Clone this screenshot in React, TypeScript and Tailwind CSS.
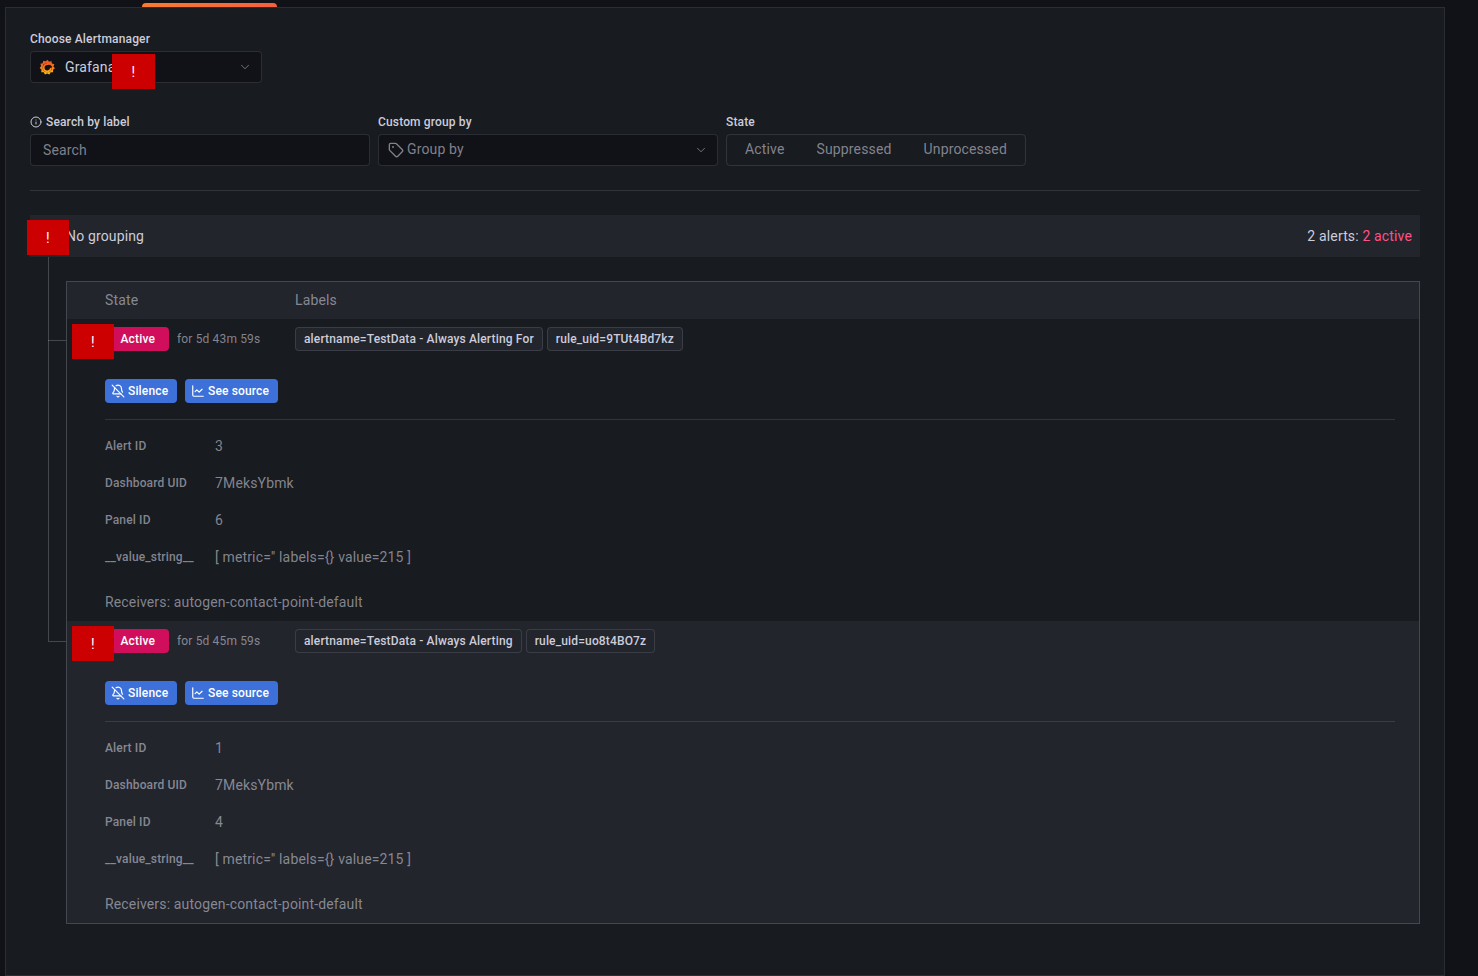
import { BellOff, ChartLine, ChevronDown, Info, Tag } from "lucide-react";

function Warn({ className }: { className: string }) {
  return (
    <div
      className={`absolute z-10 flex h-[35px] items-center justify-center bg-[#cc0000] text-sm text-white ${className}`}
    >
      !
    </div>
  );
}

function GrafanaLogo() {
  return (
    <svg viewBox="0 0 24 24" className="h-4 w-4 shrink-0">
      <defs>
        <linearGradient id="grafana" gradientUnits="userSpaceOnUse" x1="12" y1="24" x2="12" y2="1">
          <stop offset="0" stopColor="#fbca0a" />
          <stop offset="0.5" stopColor="#f47a20" />
          <stop offset="1" stopColor="#ee4a26" />
        </linearGradient>
      </defs>
      <path
        fill="url(#grafana)"
        d="M13 1l2 3 3.600-1 .8 3.600 3.600 1.200-1.400 3.400L24 14l-3 2 .2 3.800-3.700.2-2 3.400-3.300-1.800-3.300 1.800-1.700-3.400-3.800-.3.300-3.800L1 13.400l2.300-2.800L2 7.200l3.600-1L6.400 2.500 10 3.400z"
      />
      <circle cx="12.500" cy="13" r="7" fill="#111217" />
      <path
        fill="none"
        stroke="url(#grafana)"
        strokeWidth="2.800"
        d="M20 9.500A8 8 0 0 0 12.500 7.500a5.500 5.500 0 1 0 5.500 5.500"
      />
    </svg>
  );
}

function Detail({ name, value }: { name: string; value: string }) {
  return (
    <div className="flex h-[37px] items-center">
      <div className="w-[110px] text-xs font-medium text-[#ccccdc]/60">{name}</div>
      <div className="text-sm text-[#ccccdc]/60">{value}</div>
    </div>
  );
}

function LabelTag({ text }: { text: string }) {
  return (
    <div className="flex h-6 items-center rounded-sm border border-[#ccccdc]/15 bg-[#22252b] px-2 text-xs font-medium text-[#ccccdc]">
      {text}
    </div>
  );
}

type Alert = {
  since: string;
  labels: string[];
  alertId: string;
  panelId: string;
  alt?: boolean;
};

function AlertRow({ alert }: { alert: Alert }) {
  return (
    <div className={`h-[302px] pl-[38px] pr-6 pt-2 ${alert.alt ? "bg-[#22252b]" : ""}`}>
      <div className="flex h-6 items-center">
        <div className="flex w-[190px] items-center">
          <div className="flex h-6 w-16 items-center justify-end rounded-sm bg-[#d10e5c] pr-[14px] text-xs font-medium text-white">
            Active
          </div>
          <div className="ml-2 text-xs text-[#ccccdc]/60">for {alert.since}</div>
        </div>
        <div className="flex gap-1">
          {alert.labels.map((l) => (
            <LabelTag key={l} text={l} />
          ))}
        </div>
      </div>
      <div className="mt-7 flex gap-2">
        <button className="flex h-6 w-[72px] items-center gap-[3px] rounded-sm bg-[#3d71d9] pl-[6px] text-xs font-medium text-white">
          <BellOff size={14} strokeWidth={2} />
          Silence
        </button>
        <button className="flex h-6 w-[93px] items-center gap-[3px] rounded-sm bg-[#3d71d9] pl-[6px] text-xs font-medium text-white">
          <ChartLine size={14} strokeWidth={2} />
          See source
        </button>
      </div>
      <div className="mt-4 border-t border-[#ccccdc]/15 pt-[7px]">
        <Detail name="Alert ID" value={alert.alertId} />
        <Detail name="Dashboard UID" value="7MeksYbmk" />
        <Detail name="Panel ID" value={alert.panelId} />
        <Detail name="__value_string__" value="[ metric='' labels={} value=215 ]" />
      </div>
      <div className="mt-[18px] text-sm leading-[18px] text-[#ccccdc]/60">
        Receivers: autogen-contact-point-default
      </div>
    </div>
  );
}

const alerts: Alert[] = [
  {
    since: "5d 43m 59s",
    labels: ["alertname=TestData - Always Alerting For", "rule_uid=9TUt4Bd7kz"],
    alertId: "3",
    panelId: "6",
  },
  {
    since: "5d 45m 59s",
    labels: ["alertname=TestData - Always Alerting", "rule_uid=uo8t4BO7z"],
    alertId: "1",
    panelId: "4",
    alt: true,
  },
];

export default function App() {
  return (
    <div className="relative flex h-[976px] w-[1478px] flex-col overflow-hidden bg-[#111217] font-['Roboto',sans-serif] tracking-[0.15px] text-[#ccccdc]">
      <div className="h-[7px] shrink-0 pt-[3px]">
        <div className="ml-[142px] h-[4px] w-[135px] rounded-t-sm bg-gradient-to-r from-[#f97b2d] to-[#f55f3e]" />
      </div>

      <div className="ml-[5px] w-[1440px] flex-1 border border-[#ccccdc]/10 bg-[#181b1f] px-6 pt-[23px]">
        <div className="text-xs font-medium leading-4">Choose Alertmanager</div>
        <div className="mt-[4px] flex h-8 w-[232px] items-center rounded-sm border border-[#ccccdc]/15 bg-[#111217] pl-2 pr-[9px] text-sm">
          <GrafanaLogo />
          <span className="ml-[10px] flex-1">Grafana</span>
          <ChevronDown size={14} strokeWidth={1.5} className="text-[#ccccdc]/60" />
        </div>

        <div className="mt-[31px] flex gap-2">
          <div className="w-[340px]">
            <div className="flex h-[16px] items-center gap-1 text-xs font-medium">
              <Info size={12} />
              Search by label
            </div>
            <div className="mt-[4px] flex h-8 items-center rounded-sm border border-[#ccccdc]/15 bg-[#111217] px-3 text-sm text-[#ccccdc]/60">
              Search
            </div>
          </div>
          <div className="w-[340px]">
            <div className="h-[16px] text-xs font-medium leading-4">Custom group by</div>
            <div className="mt-[4px] flex h-8 items-center rounded-sm border border-[#ccccdc]/15 bg-[#111217] pl-[9px] pr-[9px] text-sm text-[#ccccdc]/60">
              <Tag size={16} className="mr-[3px]" />
              <span className="flex-1 pb-[2px]">Group by</span>
              <ChevronDown size={14} strokeWidth={1.5} className="text-[#ccccdc]/60" />
            </div>
          </div>
          <div className="w-[300px]">
            <div className="h-[16px] text-xs font-medium leading-4">State</div>
            <div className="mt-[4px] flex h-8 items-center gap-8 rounded-sm border border-[#ccccdc]/15 pb-[2px] pl-[18px] text-sm text-[#ccccdc]/60">
              <span>Active</span>
              <span>Suppressed</span>
              <span>Unprocessed</span>
            </div>
          </div>
        </div>

        <div className="mt-6 border-t border-[#ccccdc]/15" />

        <div className="mt-6 flex h-[42px] items-center justify-between bg-[#22252b] pl-9 pr-2 text-sm">
          <span>No grouping</span>
          <span>
            2 alerts: <span className="text-[#ff5286]">2 active</span>
          </span>
        </div>

        <div className="relative pl-9 pt-6">
          <div className="absolute left-[18px] top-0 h-[385px] w-[18px] border-b border-l border-[#ccccdc]/25" />
          <div className="absolute left-[18px] top-[83px] h-px w-[18px] bg-[#ccccdc]/25" />
          <div className="border border-[#ccccdc]/25">
            <div className="flex h-[37px] items-center bg-[#22252b] pb-[2px] pl-[38px] text-sm text-[#ccccdc]/60">
              <div className="w-[190px]">State</div>
              <div>Labels</div>
            </div>
            {alerts.map((a) => (
              <AlertRow key={a.since} alert={a} />
            ))}
          </div>
        </div>
      </div>

      <Warn className="left-[112px] top-[54px] w-[43px]" />
      <Warn className="left-[27px] top-[220px] w-[42px]" />
      <Warn className="left-[72px] top-[324px] w-[42px]" />
      <Warn className="left-[72px] top-[626px] w-[42px]" />
    </div>
  );
}
